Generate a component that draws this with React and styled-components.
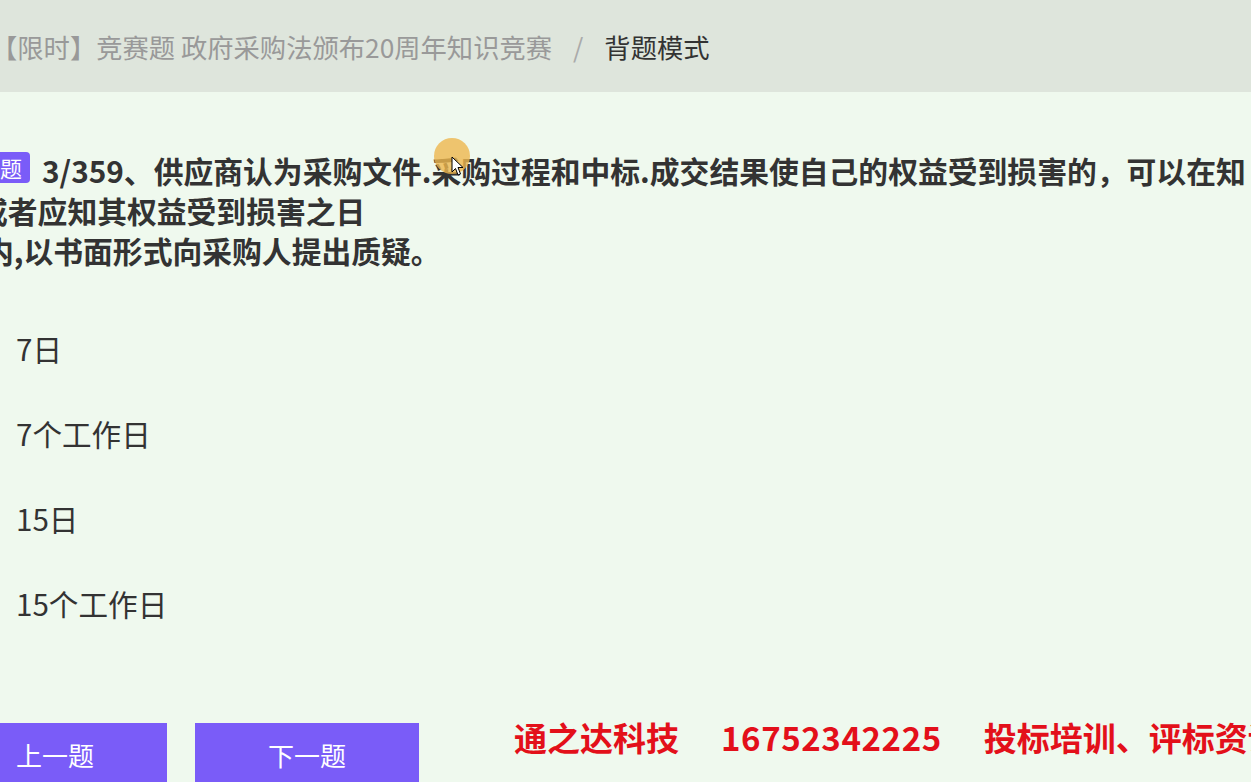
import styled, { createGlobalStyle } from 'styled-components'

const GlobalStyle = createGlobalStyle`
  html, body {
    margin: 0;
    padding: 0;
    background: #eff9ee;
  }
  body {
    font-family: "Noto Sans CJK SC", "Noto Sans", sans-serif;
    color: #333;
    overflow: hidden;
  }
`;

const Page = styled.div`
  position: relative;
  width: 1251px;
  height: 782px;
  overflow: hidden;
  background: #eff9ee;
  display: flex;
  flex-direction: column;
`;

const Header = styled.div`
  height: 92px;
  flex-shrink: 0;
  background: #dee5dc;
  display: flex;
  align-items: center;
  font-size: 26.3px;
  white-space: nowrap;
`;

const Crumb = styled.span`
  color: ${(p) => (p.$active ? '#333' : '#999')};
  margin-left: ${(p) => p.$first ? '-9px' : '0'};
`;

const Sep = styled.span`
  color: #aaa;
  margin: 0 21px;
`;

const Question = styled.div`
  margin-top: 58px;
  margin-left: -22px;
  font-size: 29.8px;
  font-weight: 700;
  line-height: 40px;
  color: #333;
  white-space: nowrap;
`;

const QLine = styled.div`
  padding-left: ${(p) => p.$indent || 0}px;
`;

const Badge = styled.span`
  display: inline-block;
  vertical-align: top;
  margin: 2px 12px 0 -30px;
  height: 31px;
  line-height: 31px;
  padding: 0 8px;
  border-radius: 4px;
  background: #7a5cf8;
  color: #fff;
  font-size: 22px;
  font-weight: 400;
`;

const Options = styled.div`
  margin-top: 36px;
  display: flex;
  flex-direction: column;
`;

const Option = styled.div`
  height: 85px;
  display: flex;
  align-items: center;
  padding-left: 16px;
  font-size: 29.6px;
  color: #333;
`;

const Footer = styled.div`
  margin-top: 77px;
  display: flex;
  align-items: flex-start;
  white-space: nowrap;
`;

const NavButton = styled.button`
  flex-shrink: 0;
  width: 224px;
  height: 62px;
  border: none;
  background: #7a5cf8;
  color: #fff;
  font-family: inherit;
  font-size: 26px;
  margin: 0 28px 0 ${(p) => p.$first ? '-57px' : '0'};
  padding: 0;
`;

const Promo = styled.div`
  margin: -6px 0 0 67px;
  color: #e3101a;
  font-size: 33px;
  font-weight: 700;
  line-height: 40px;
  display: flex;
  gap: 42px;
  flex-shrink: 0;
`;

const Digits = styled.span`
  letter-spacing: 0.6px;
`;

const Cursor = styled.div`
  position: absolute;
  left: 434px;
  top: 138px;
  width: 36px;
  height: 36px;
  border-radius: 50%;
  background: rgba(238, 182, 78, 0.8);
`;

const Arrow = styled.svg`
  position: absolute;
  left: 451px;
  top: 156px;
`;

export default function App() {
  return (
    <Page>
      <GlobalStyle />
      <Header>
        <Crumb $first>【限时】竞赛题 政府采购法颁布20周年知识竞赛</Crumb>
        <Sep>/</Sep>
        <Crumb $active>背题模式</Crumb>
      </Header>
      <Question>
        <QLine>
          <Badge>单选题</Badge>
          3/359、供应商认为采购文件.采购过程和中标.成交结果使自己的权益受到损害的，可以在知
        </QLine>
        <QLine>或者应知其权益受到损害之日</QLine>
        <QLine $indent={6}>内,以书面形式向采购人提出质疑。</QLine>
      </Question>
      <Options>
        <Option>7日</Option>
        <Option>7个工作日</Option>
        <Option>15日</Option>
        <Option>15个工作日</Option>
      </Options>
      <Footer>
        <NavButton $first>上一题</NavButton>
        <NavButton>下一题</NavButton>
        <Promo>
          <span>通之达科技</span>
          <Digits>16752342225</Digits>
          <span>投标培训、评标资讯</span>
        </Promo>
      </Footer>
      <Cursor />
      <Arrow width="14" height="21" viewBox="0 0 14 21">
        <path d="M1 1 L1 16 L4.5 12.5 L7 19 L9.5 18 L7 11.5 L12 11.5 Z" fill="#fff" stroke="#000" strokeWidth="1" strokeLinejoin="round" />
      </Arrow>
    </Page>
  );
}
